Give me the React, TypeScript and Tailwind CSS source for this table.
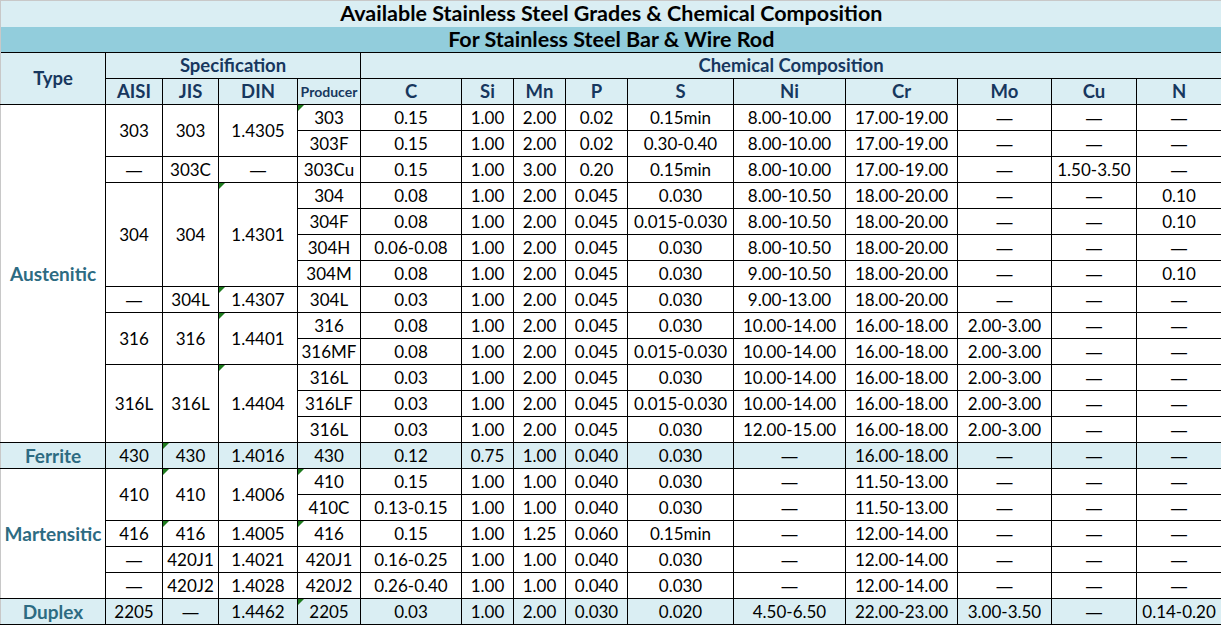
import React from "react";

interface Spec {
  aisi: string;
  jis: string;
  din: string;
  span: number;
  mark?: "jis" | "din";
}

interface Row {
  type?: { label: string; span: number };
  spec?: Spec;
  prod: string;
  prodMark?: boolean;
  vals: string[];
  shade?: boolean;
}

const D = "—";

const rows: Row[] = [
  { type: { label: "Austenitic", span: 13 }, spec: { aisi: "303", jis: "303", din: "1.4305", span: 2 }, prod: "303", prodMark: true, vals: ["0.15", "1.00", "2.00", "0.02", "0.15min", "8.00-10.00", "17.00-19.00", D, D, D] },
  { prod: "303F", vals: ["0.15", "1.00", "2.00", "0.02", "0.30-0.40", "8.00-10.00", "17.00-19.00", D, D, D] },
  { spec: { aisi: D, jis: "303C", din: D, span: 1 }, prod: "303Cu", vals: ["0.15", "1.00", "3.00", "0.20", "0.15min", "8.00-10.00", "17.00-19.00", D, "1.50-3.50", D] },
  { spec: { aisi: "304", jis: "304", din: "1.4301", span: 4, mark: "din" }, prod: "304", vals: ["0.08", "1.00", "2.00", "0.045", "0.030", "8.00-10.50", "18.00-20.00", D, D, "0.10"] },
  { prod: "304F", vals: ["0.08", "1.00", "2.00", "0.045", "0.015-0.030", "8.00-10.50", "18.00-20.00", D, D, "0.10"] },
  { prod: "304H", vals: ["0.06-0.08", "1.00", "2.00", "0.045", "0.030", "8.00-10.50", "18.00-20.00", D, D, D] },
  { prod: "304M", vals: ["0.08", "1.00", "2.00", "0.045", "0.030", "9.00-10.50", "18.00-20.00", D, D, "0.10"] },
  { spec: { aisi: D, jis: "304L", din: "1.4307", span: 1, mark: "din" }, prod: "304L", vals: ["0.03", "1.00", "2.00", "0.045", "0.030", "9.00-13.00", "18.00-20.00", D, D, D] },
  { spec: { aisi: "316", jis: "316", din: "1.4401", span: 2, mark: "din" }, prod: "316", vals: ["0.08", "1.00", "2.00", "0.045", "0.030", "10.00-14.00", "16.00-18.00", "2.00-3.00", D, D] },
  { prod: "316MF", vals: ["0.08", "1.00", "2.00", "0.045", "0.015-0.030", "10.00-14.00", "16.00-18.00", "2.00-3.00", D, D] },
  { spec: { aisi: "316L", jis: "316L", din: "1.4404", span: 3, mark: "din" }, prod: "316L", vals: ["0.03", "1.00", "2.00", "0.045", "0.030", "10.00-14.00", "16.00-18.00", "2.00-3.00", D, D] },
  { prod: "316LF", vals: ["0.03", "1.00", "2.00", "0.045", "0.015-0.030", "10.00-14.00", "16.00-18.00", "2.00-3.00", D, D] },
  { prod: "316L", vals: ["0.03", "1.00", "2.00", "0.045", "0.030", "12.00-15.00", "16.00-18.00", "2.00-3.00", D, D] },
  { type: { label: "Ferrite", span: 1 }, shade: true, spec: { aisi: "430", jis: "430", din: "1.4016", span: 1, mark: "jis" }, prod: "430", vals: ["0.12", "0.75", "1.00", "0.040", "0.030", D, "16.00-18.00", D, D, D] },
  { type: { label: "Martensitic", span: 5 }, spec: { aisi: "410", jis: "410", din: "1.4006", span: 2, mark: "jis" }, prod: "410", prodMark: true, vals: ["0.15", "1.00", "1.00", "0.040", "0.030", D, "11.50-13.00", D, D, D] },
  { prod: "410C", vals: ["0.13-0.15", "1.00", "1.00", "0.040", "0.030", D, "11.50-13.00", D, D, D] },
  { spec: { aisi: "416", jis: "416", din: "1.4005", span: 1, mark: "jis" }, prod: "416", prodMark: true, vals: ["0.15", "1.00", "1.25", "0.060", "0.15min", D, "12.00-14.00", D, D, D] },
  { spec: { aisi: D, jis: "420J1", din: "1.4021", span: 1 }, prod: "420J1", vals: ["0.16-0.25", "1.00", "1.00", "0.040", "0.030", D, "12.00-14.00", D, D, D] },
  { spec: { aisi: D, jis: "420J2", din: "1.4028", span: 1 }, prod: "420J2", vals: ["0.26-0.40", "1.00", "1.00", "0.040", "0.030", D, "12.00-14.00", D, D, D] },
  { type: { label: "Duplex", span: 1 }, shade: true, spec: { aisi: "2205", jis: D, din: "1.4462", span: 1 }, prod: "2205", prodMark: true, vals: ["0.03", "1.00", "2.00", "0.030", "0.020", "4.50-6.50", "22.00-23.00", "3.00-3.50", D, "0.14-0.20"] },
];

const widths = [105, 57, 56, 79, 63, 101, 52, 52, 62, 106, 112, 112, 94, 85, 85];
const elements = ["C", "Si", "Mn", "P", "S", "Ni", "Cr", "Mo", "Cu", "N"];

// little green "number stored as text" flag in the corner of a cell
const Flag = () => (
  <span className="absolute left-0 top-0 h-0 w-0 border-t-[6px] border-r-[6px] border-t-[#1e7b1e] border-r-transparent" />
);

// Lato's em dash is short, the sheet's one is wide
const Val = ({ v }: { v: string }) =>
  v === D ? <span className="font-['Liberation_Sans',sans-serif] text-[16px]">{v}</span> : <>{v}</>;

const cell = "relative border border-black p-0 text-center whitespace-nowrap";
const head = "border border-black p-0 text-center font-bold text-[18.5px] text-[#17375e] bg-[#daeef3]";

export default function App() {
  return (
    <div className="w-[1221px] bg-white font-['Lato','Liberation_Sans',sans-serif] text-[17px] leading-none text-black">
      <table className="w-[1221px] table-fixed border-collapse">
        <colgroup>
          {widths.map((w, i) => (
            <col key={i} style={{ width: w }} />
          ))}
        </colgroup>
        <tbody>
          <tr className="h-[26px]">
            <td colSpan={15} className="border-t border-l border-[#c8c8c8] bg-[#daeef3] p-0 text-center text-[21.5px] font-bold">
              Available Stainless Steel Grades &amp; Chemical Composition
            </td>
          </tr>
          <tr className="h-[26px]">
            <td colSpan={15} className="border-l border-[#c8c8c8] bg-[#92cddc] p-0 text-center text-[21.5px] font-bold">
              For Stainless Steel Bar &amp; Wire Rod
            </td>
          </tr>
          <tr className="h-[26px]">
            <td rowSpan={2} className={`${head} border-l-[#c8c8c8]`}>
              Type
            </td>
            <td colSpan={4} className={head}>
              Specification
            </td>
            <td colSpan={10} className={head}>
              Chemical Composition
            </td>
          </tr>
          <tr className="h-[26px]">
            <td className={head}>AISI</td>
            <td className={head}>JIS</td>
            <td className={head}>DIN</td>
            <td className={`${head} !text-[14px]`}>Producer</td>
            {elements.map((e) => (
              <td key={e} className={head}>
                {e}
              </td>
            ))}
          </tr>
          {rows.map((r, i) => {
            const bg = r.shade ? "bg-[#daeef3]" : "bg-white";
            return (
              <tr key={i} className="h-[26px]">
                {r.type && (
                  <td
                    rowSpan={r.type.span}
                    className={`border border-black border-l-[#c8c8c8] p-0 text-center text-[19px] font-bold text-[#2d6b82] ${bg}`}
                  >
                    {r.type.label}
                  </td>
                )}
                {r.spec && (
                  <>
                    <td rowSpan={r.spec.span} className={`${cell} ${bg}`}>
                      <Val v={r.spec.aisi} />
                    </td>
                    <td rowSpan={r.spec.span} className={`${cell} ${bg}`}>
                      {r.spec.mark === "jis" && <Flag />}
                      <Val v={r.spec.jis} />
                    </td>
                    <td rowSpan={r.spec.span} className={`${cell} ${bg}`}>
                      {r.spec.mark === "din" && <Flag />}
                      <Val v={r.spec.din} />
                    </td>
                  </>
                )}
                <td className={`${cell} ${bg}`}>
                  {r.prodMark && <Flag />}
                  {r.prod}
                </td>
                {r.vals.map((v, j) => (
                  <td key={j} className={`${cell} ${bg}`}>
                    <Val v={v} />
                  </td>
                ))}
              </tr>
            );
          })}
        </tbody>
      </table>
    </div>
  );
}
